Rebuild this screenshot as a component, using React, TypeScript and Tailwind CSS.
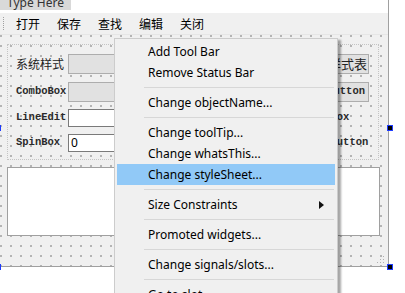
import type React from "react"

const menuItems: { label?: string; sep?: boolean; active?: boolean; sub?: boolean }[] = [
  { label: "Add Tool Bar" },
  { label: "Remove Status Bar" },
  { sep: true },
  { label: "Change objectName..." },
  { sep: true },
  { label: "Change toolTip..." },
  { label: "Change whatsThis..." },
  { label: "Change styleSheet...", active: true },
  { sep: true },
  { label: "Size Constraints", sub: true },
  { sep: true },
  { label: "Promoted widgets..." },
  { sep: true },
  { label: "Change signals/slots..." },
  { sep: true },
  { label: "Go to slot..." },
]

const mono = "font-['Liberation_Mono',monospace] text-[10.5px] font-bold text-[#2a2a2a]"
const cjk = "font-['Noto_Sans_CJK_SC',sans-serif] text-[12px] text-[#222]"

const Handle: React.FC<{ className: string }> = ({ className }) => (
  <div className={`absolute w-[6px] h-[6px] bg-black border border-[#1e3cff] ${className}`} />
)

const ContextMenu: React.FC = () => (
  <div className="absolute left-[114px] top-[38px] w-[224px] h-[270px] bg-[#f0f0f0] border border-[#cccccc] pt-[2px] shadow-[3px_2px_2px_rgba(0,0,0,0.35)] font-['Noto_Sans',sans-serif] text-[12px] text-black">
    {menuItems.map((it, i) =>
      it.sep ? (
        <div key={i} className="h-[9px] flex items-center ml-[29px] mr-[3px]">
          <div className="h-px w-full bg-[#d7d7d7]" />
        </div>
      ) : (
        <div
          key={i}
          className={`h-[21px] mx-[2px] pl-[31px] pr-[11px] flex items-center justify-between ${it.active ? "bg-[#91c9f7]" : ""}`}
        >
          <span>{it.label}</span>
          {it.sub && (
            <svg width="5" height="8" viewBox="0 0 5 8">
              <polygon points="0,0 5,4 0,8" fill="#111" />
            </svg>
          )}
        </div>
      )
    )}
  </div>
)

export default function App() {
  return (
    <div className="relative w-[405px] h-[293px] overflow-hidden bg-white">
      <div className="w-[389px] border-r border-b border-[#a0a0a0] flex flex-col">
        {/* tab strip */}
        <div className="h-[13px] flex items-start">
          <div className="w-[71px] h-[10px] bg-[#d9d9d9] overflow-hidden pl-[7px]">
            <div className="-mt-[4px] leading-[14px] font-['Noto_Sans',sans-serif] text-[12px] text-[#333]">Type Here</div>
          </div>
        </div>

        {/* menu bar */}
        <div className="h-[22px] bg-[#f0f0f0] border-b border-[#e6e6e6] flex items-center">
          <div className="w-[16px] h-full flex justify-start pl-[3px] py-[4px]">
            <div className="w-px h-full border-l border-dotted border-[#a0a0a0]" />
          </div>
          <div className={`flex gap-[17px] pt-[1px] ${cjk} text-black`}>
            <span>打开</span>
            <span>保存</span>
            <span>查找</span>
            <span>编辑</span>
            <span>关闭</span>
          </div>
        </div>

        {/* form */}
        <div className="relative h-[231px] bg-[#f0f0f0] bg-[radial-gradient(circle_at_1px_1px,#b4b4b4_0.8px,transparent_0)] bg-[length:10px_10px] pl-[7px] pr-[8px] pt-[9px]">
          <div className="w-[372px] h-[116px] border border-dotted border-[#c4c4c4] pl-[8px] pr-[9px] pt-[9px] flex flex-col">
            <div className="h-[20px] flex items-center">
              <span className={`w-[52px] ${cjk}`}>系统样式</span>
              <div className="flex-1 h-full bg-[#e1e1e1] border border-[#adadad]" />
              <div className="ml-[4px] w-[70px] h-full bg-[#e1e1e1] border border-[#adadad] flex items-center justify-end pr-[1px] font-['Noto_Sans_CJK_SC',sans-serif] text-[13px] text-[#222]">
                设置样式表
              </div>
            </div>
            <div className="h-[20px] mt-[8px] flex items-center">
              <span className={`w-[52px] ${mono}`}>ComboBox</span>
              <div className="flex-1 h-full bg-[#e1e1e1] border border-[#adadad]" />
              <div className={`ml-[4px] w-[70px] h-full bg-[#e1e1e1] border border-[#adadad] flex items-center justify-end pr-[3px] ${mono}`}>
                PushButton
              </div>
            </div>
            <div className="h-[18px] mt-[7px] flex items-center">
              <span className={`w-[52px] ${mono}`}>LineEdit</span>
              <div className="flex-1 h-full bg-white border border-[#7a7a7a]" />
              <div className={`ml-[4px] w-[70px] pl-[0px] ${mono}`}>CheckBox</div>
            </div>
            <div className="h-[18px] mt-[7px] flex items-center">
              <span className={`w-[52px] ${mono}`}>SpinBox</span>
              <div className="flex-1 h-full bg-white border border-[#7a7a7a] flex items-center pl-[2px] font-['Noto_Sans',sans-serif] text-[12px] text-black">
                0
              </div>
              <div className={`ml-[4px] w-[70px] pl-[0px] ${mono}`}>RadioButton</div>
            </div>
          </div>

          <div className="mt-[7px] h-[69px] bg-white border border-[#a0a0a0]" />

          {/* size grip */}
          <svg className="absolute right-[3px] bottom-[2px]" width="8" height="8" viewBox="0 0 8 8">
            <rect x="6" y="0" width="1" height="1" fill="#b0b0b0" />
            <rect x="3" y="3" width="1" height="1" fill="#b0b0b0" />
            <rect x="6" y="3" width="1" height="1" fill="#b0b0b0" />
            <rect x="0" y="6" width="1" height="1" fill="#b0b0b0" />
            <rect x="3" y="6" width="1" height="1" fill="#b0b0b0" />
            <rect x="6" y="6" width="1" height="1" fill="#b0b0b0" />
          </svg>
        </div>
      </div>

      <Handle className="left-[-5px] top-[125px]" />
      <Handle className="left-[387px] top-[125px]" />
      <Handle className="left-[387px] top-[264px]" />
      <Handle className="left-[-5px] top-[264px]" />

      <ContextMenu />
    </div>
  )
}
